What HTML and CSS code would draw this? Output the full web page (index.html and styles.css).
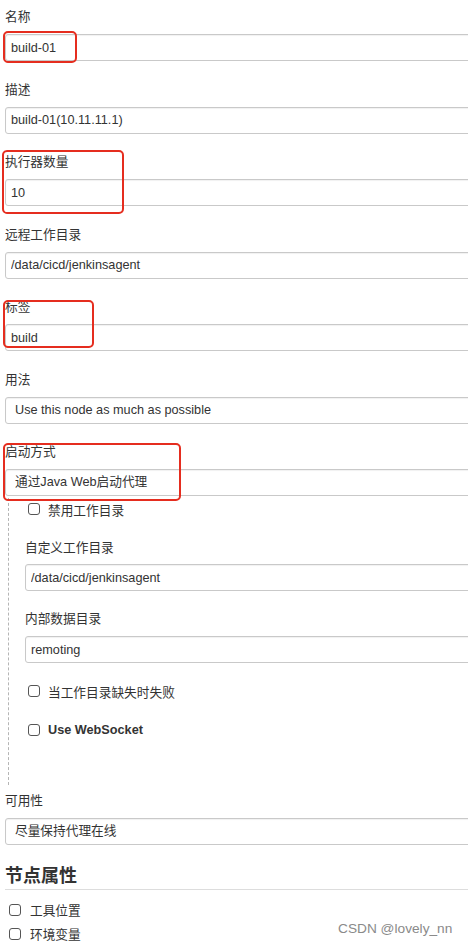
FILE: index.html
```html
<!DOCTYPE html>
<html lang="zh-CN">
<head>
<meta charset="utf-8">
<title>节点配置</title>
<link rel="stylesheet" href="styles.css">
</head>
<body>
<form class="page">
  <div class="field">
    <div class="label">名称</div>
    <input class="text" type="text" value="build-01">
  </div>
  <div class="field">
    <div class="label">描述</div>
    <input class="text" type="text" value="build-01(10.11.11.1)">
  </div>
  <div class="field">
    <div class="label">执行器数量</div>
    <input class="text" type="text" value="10">
  </div>
  <div class="field">
    <div class="label">远程工作目录</div>
    <input class="text" type="text" value="/data/cicd/jenkinsagent">
  </div>
  <div class="field">
    <div class="label">标签</div>
    <input class="text" type="text" value="build">
  </div>
  <div class="field">
    <div class="label">用法</div>
    <div class="select">Use this node as much as possible</div>
  </div>
  <div class="field launch">
    <div class="label">启动方式</div>
    <div class="select">通过Java Web启动代理</div>
  </div>

  <div class="sub">
    <label class="check first"><span class="box"></span><span>禁用工作目录</span></label>
    <div class="field subfield">
      <div class="label">自定义工作目录</div>
      <input class="text" type="text" value="/data/cicd/jenkinsagent">
    </div>
    <div class="field subfield">
      <div class="label">内部数据目录</div>
      <input class="text" type="text" value="remoting">
    </div>
    <label class="check"><span class="box"></span><span>当工作目录缺失时失败</span></label>
    <label class="check ws"><span class="box"></span><span>Use WebSocket</span></label>
  </div>

  <div class="field avail">
    <div class="label">可用性</div>
    <div class="select">尽量保持代理在线</div>
  </div>

  <h2 class="section">节点属性</h2>
  <label class="check prop"><span class="box"></span><span>工具位置</span></label>
  <label class="check prop"><span class="box"></span><span>环境变量</span></label>
</form>

<div class="mark m1"></div>
<div class="mark m2"></div>
<div class="mark m3"></div>
<div class="mark m4"></div>
<div class="watermark">CSDN @lovely_nn</div>
</body>
</html>
```
FILE: styles.css
```css
html, body {
  margin: 0;
  padding: 0;
  background: #fff;
  overflow: hidden;
}
body {
  width: 468px;
  height: 946px;
  position: relative;
  font-family: "Liberation Sans", Arial, "Noto Sans CJK SC", sans-serif;
  font-size: 12.7px;
  color: #333;
}
.page {
  box-sizing: border-box;
  width: 468px;
  height: 946px;
  overflow: hidden;
  padding: 7px 0 0 5px;
}
.field {
  margin-bottom: 18.5px;
}
.label {
  height: 20px;
  line-height: 20px;
  margin-bottom: 7px;
}
.text, .select {
  display: block;
  box-sizing: border-box;
  width: calc(100% + 20px);
  height: 27px;
  margin: 0;
  border: 1px solid #c9c9c9;
  border-radius: 3px 0 0 3px;
  background: #fff;
  box-shadow: inset 0 1px 1px rgba(0,0,0,0.06);
  font: inherit;
  color: #333;
  outline: none;
}
.text {
  padding: 0 5px;
}
.select {
  padding: 0 9px;
  line-height: 25px;
}
.launch {
  margin-bottom: 0;
}
.sub {
  margin: 2px 0 0 3px;
  border-left: 1px dashed #b5b5b5;
  padding: 1px 0 45px 16px;
}
.check {
  display: flex;
  align-items: center;
  height: 20px;
  margin-bottom: 18.5px;
}
.check .box {
  box-sizing: border-box;
  width: 12px;
  height: 12px;
  border: 1px solid #555;
  border-radius: 3px;
  background: #fff;
  margin: 0 8px 0 3px;
  flex: none;
}
.check.first {
  margin-bottom: 19px;
}
.subfield .label {
  margin-bottom: 6px;
}
.subfield {
  margin-bottom: 18px;
}
.subfield + .subfield .label {
  margin-bottom: 7px;
}
.ws {
  font-weight: bold;
  margin-bottom: 0;
}
.avail {
  margin-top: 6px;
  margin-bottom: 0;
}
.section {
  margin: 19px 0 0 0;
  font-size: 18px;
  line-height: 24px;
  height: 24px;
  font-weight: bold;
  padding-bottom: 1px;
  border-bottom: 1px solid #ddd;
  color: #333;
}
.check.prop {
  margin: 0;
  height: 24px;
}
.section + .check.prop {
  margin-top: 8px;
}
.check.prop .box {
  margin: 0 9px 0 4px;
}
.mark {
  position: absolute;
  border: 2.5px solid #e52d1f;
  border-radius: 5px;
  box-sizing: border-box;
}
.m1 { left: 3px; top: 31px; width: 74px; height: 32px; }
.m2 { left: 2px; top: 150px; width: 122px; height: 64px; }
.m3 { left: 3px; top: 300px; width: 91px; height: 48px; }
.m4 { left: 3px; top: 443px; width: 178px; height: 58px; }
.watermark {
  position: absolute;
  left: 338px;
  top: 920px;
  font-size: 13.7px;
  line-height: 18px;
  color: #8a8a8a;
}
```
